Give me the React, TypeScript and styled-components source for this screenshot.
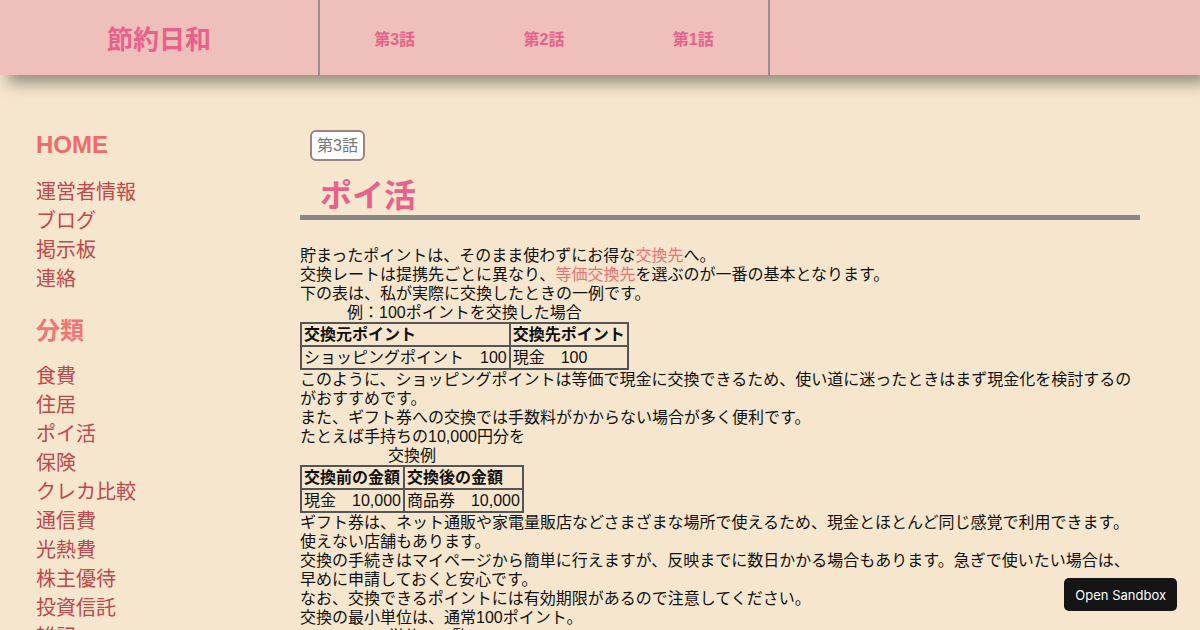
import React from "react";
import styled, { createGlobalStyle } from "styled-components";

const GlobalStyle = createGlobalStyle`
  html, body { margin: 0; padding: 0; }
  body {
    background: #f5e6cd;
    font-family: "Liberation Sans", "Noto Sans CJK JP", sans-serif;
    overflow-x: hidden;
  }
`;

const Header = styled.header`
  position: relative;
  z-index: 1;
  display: flex;
  height: 75px;
  background: #efc0bb;
  box-shadow: 8px 8px 14px rgba(70, 70, 60, 0.55);
`;

const Logo = styled.div`
  width: 318px;
  border-right: 2px solid #9d8b8c;
  display: flex;
  align-items: center;
  justify-content: center;
  font-size: 26px;
  font-weight: bold;
  color: #e9608a;
`;

const Nav = styled.nav`
  width: 448px;
  border-right: 2px solid #9d8b8c;
  display: grid;
  grid-template-columns: repeat(3, 1fr);
  align-items: center;
`;

const NavItem = styled.a`
  text-align: center;
  font-size: 16px;
  font-weight: bold;
  color: #e9608a;
  text-decoration: none;
`;

const Layout = styled.div`
  display: flex;
  padding-top: 55px;
`;

const Sidebar = styled.aside`
  flex-shrink: 0;
  width: 264px;
  padding-left: 36px;
`;

const Home = styled.a`
  display: block;
  font-size: 24px;
  line-height: 30px;
  font-weight: bold;
  color: #f26b6b;
  text-decoration: none;
`;

const LinkList = styled.ul<{ $top: number }>`
  list-style: none;
  margin: ${(p) => p.$top}px 0 0;
  padding: 0;
`;

const LinkItem = styled.li`
  font-size: 20px;
  line-height: 29px;
  color: #c2474c;
`;

const SideHeading = styled.h3`
  margin: 22px 0 0;
  font-size: 24px;
  line-height: 30px;
  font-weight: bold;
  color: #f27474;
`;

const Main = styled.main`
  flex-shrink: 0;
  width: 840px;
`;

const CrumbRow = styled.div`
  padding-left: 10px;
`;

const Crumb = styled.span`
  display: inline-block;
  padding: 4px 5px;
  border: 2px solid #9c8282;
  border-radius: 6px;
  background: #fff;
  color: #777;
  font-size: 16px;
  line-height: 19px;
`;

const Title = styled.h2`
  margin: 17px 0 26px;
  padding-left: 20px;
  font-size: 32px;
  line-height: 37px;
  font-weight: bold;
  color: #e9608a;
  border-bottom: 5px solid #878787;
`;

const Article = styled.div`
  font-size: 16px;
  line-height: 19px;
  color: #111;
`;

const Line = styled.p`
  margin: 0;
`;

const Accent = styled.a`
  color: #f07070;
  text-decoration: none;
`;

const DataTable = styled.table`
  border-collapse: collapse;
  caption {
    line-height: 19px;
  }
  th,
  td {
    border: 2px solid #555;
    padding: 1px 2px;
    text-align: left;
    line-height: 19px;
  }
  th {
    font-weight: bold;
  }
`;

const SandboxButton = styled.a`
  position: fixed;
  right: 23px;
  bottom: 19px;
  z-index: 5;
  height: 33px;
  padding: 0 11px;
  display: flex;
  align-items: center;
  background: #151515;
  color: #fff;
  border-radius: 5px;
  font-family: Inter, "Liberation Sans", sans-serif;
  font-size: 13px;
  text-decoration: none;
`;

type Row = [string, string];

const Table = ({ caption, head, rows }: { caption: React.ReactNode; head: Row; rows: Row[] }) => (
  <DataTable>
    <caption>{caption}</caption>
    <thead>
      <tr>
        <th>{head[0]}</th>
        <th>{head[1]}</th>
      </tr>
    </thead>
    <tbody>
      {rows.map((r, i) => (
        <tr key={i}>
          <td>{r[0]}</td>
          <td>{r[1]}</td>
        </tr>
      ))}
    </tbody>
  </DataTable>
);

const mainLinks = ["運営者情報", "ブログ", "掲示板", "連絡"];
const categories = ["食費", "住居", "ポイ活", "保険", "クレカ比較", "通信費", "光熱費", "株主優待", "投資信託", "雑記"];

export default function App() {
  return (
    <>
      <GlobalStyle />
      <Header>
        <Logo>節約日和</Logo>
        <Nav>
          <NavItem href="#">第3話</NavItem>
          <NavItem href="#">第2話</NavItem>
          <NavItem href="#">第1話</NavItem>
        </Nav>
      </Header>
      <Layout>
        <Sidebar>
          <Home href="#">HOME</Home>
          <LinkList $top={18}>
            {mainLinks.map((l) => (
              <LinkItem key={l}>{l}</LinkItem>
            ))}
          </LinkList>
          <SideHeading>分類</SideHeading>
          <LinkList $top={16}>
            {categories.map((l) => (
              <LinkItem key={l}>{l}</LinkItem>
            ))}
          </LinkList>
        </Sidebar>
        <Main>
          <CrumbRow>
            <Crumb>第3話</Crumb>
          </CrumbRow>
          <Title>ポイ活</Title>
          <Article>
            <Line>
              貯まったポイントは、そのまま使わずにお得な<Accent href="#">交換先</Accent>へ。
            </Line>
            <Line>
              交換レートは提携先ごとに異なり、<Accent href="#">等価交換先</Accent>を選ぶのが一番の基本となります。
            </Line>
            <Line>下の表は、私が実際に交換したときの一例です。</Line>
            <Table
              caption="例：100ポイントを交換した場合"
              head={["交換元ポイント", "交換先ポイント"]}
              rows={[["ショッピングポイント　100", "現金　100"]]}
            />
            <Line>
              このように、ショッピングポイントは等価で現金に交換できるため、使い道に迷ったときはまず現金化を検討するのがおすすめです。
            </Line>
            <Line>また、ギフト券への交換では手数料がかからない場合が多く便利です。</Line>
            <Line>たとえば手持ちの10,000円分を</Line>
            <Table
              caption="交換例"
              head={["交換前の金額", "交換後の金額"]}
              rows={[["現金　10,000", "商品券　10,000"]]}
            />
            <Line>
              ギフト券は、ネット通販や家電量販店などさまざまな場所で使えるため、現金とほとんど同じ感覚で利用できます。使えない店舗もあります。
            </Line>
            <Line>
              交換の手続きはマイページから簡単に行えますが、反映までに数日かかる場合もあります。急ぎで使いたい場合は、早めに申請しておくと安心です。
            </Line>
            <Line>なお、交換できるポイントには有効期限があるので注意してください。</Line>
            <Line>交換の最小単位は、通常100ポイント。</Line>
            <Table
              caption="単位の一覧"
              head={["サービス名", "最小交換単位"]}
              rows={[
                ["ショッピング　100", "マイル　1,000"],
                ["ギフト券　500", "現金　100"],
              ]}
            />
          </Article>
        </Main>
      </Layout>
      <SandboxButton href="#">Open Sandbox</SandboxButton>
    </>
  );
}
